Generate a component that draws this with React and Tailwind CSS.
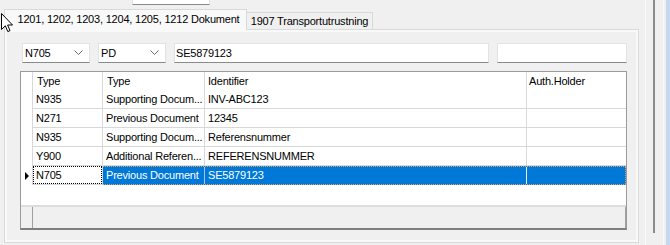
import React from "react";

const rows = [
  ["N935", "Supporting Docum...", "INV-ABC123", ""],
  ["N271", "Previous Document", "12345", ""],
  ["N935", "Supporting Docum...", "Referensnummer", ""],
  ["Y900", "Additional Referen...", "REFERENSNUMMER", ""],
  ["N705", "Previous Document", "SE5879123", ""],
];

const Chevron = () => (
  <svg width="9" height="6" viewBox="0 0 9 6" className="shrink-0">
    <polyline points="0.5,0.5 4.5,4.5 8.5,0.5" fill="none" stroke="#6d6d6d" strokeWidth="1" />
  </svg>
);

const Combo = ({ value }) => (
  <div className="w-[68px] h-[20px] bg-white border border-[#e3e3e3] border-b-[#8a8a8a] flex items-center pl-[2px] pr-[6px] justify-between">
    <span>{value}</span>
    <Chevron />
  </div>
);

const Cursor = () => (
  <svg width="13" height="20" viewBox="0 0 13 20" className="absolute left-[1px] top-[13px] z-20">
    <path
      d="M0.5 0.5 L0.5 16.5 L4.3 12.8 L6.8 18.6 L9 17.6 L6.6 12 L11.5 12 Z"
      fill="white"
      stroke="black"
      strokeWidth="1"
      strokeLinejoin="miter"
    />
  </svg>
);

const cell = "overflow-hidden whitespace-nowrap flex items-center";

const App = () => {
  return (
    <div className="w-[670px] h-[245px] bg-[#f0f0f0] relative overflow-hidden flex font-['Liberation_Sans',Arial,sans-serif] text-[11px] tracking-[-0.2px] text-black leading-none">
      <Cursor />
      {/* main area */}
      <div className="w-[640px] flex flex-col">
        <div className="h-[9px]">
          <div className="ml-[132px] w-[78px] h-[5px] bg-white border border-t-0 border-[#e3e3e3] border-b-[#8a8a8a]" />
        </div>
        <div className="h-[21px] flex items-end ml-[4px] whitespace-nowrap">
          <div className="relative z-10 w-[243px] h-[21px] bg-[#f9f9f9] border border-b-0 border-[#d9d9d9] flex items-center justify-center pl-[6px] pb-[1px]">
            1201, 1202, 1203, 1204, 1205, 1212 Dokument
          </div>
          <div className="w-[126px] h-[18px] bg-[#f0f0f0] border border-l-0 border-b-0 border-[#d9d9d9] flex items-center justify-center">
            1907 Transportutrustning
          </div>
        </div>
        <div className="-mt-px ml-[4px] w-[635px] h-[214px] border border-[#dadada] bg-[#f9f9f9] p-[2px]">
          <div className="w-full h-full bg-[#f0f0f0] pl-[14px] pt-[11px]">
            <div className="flex gap-[8px] ml-px">
              <Combo value="N705" />
              <Combo value="PD" />
              <div className="w-[315px] h-[20px] bg-white border border-[#e3e3e3] border-b-[#8a8a8a] flex items-center pl-px">
                SE5879123
              </div>
              <div className="w-[130px] h-[20px] bg-white border border-[#e3e3e3] border-b-[#8a8a8a]" />
            </div>

            {/* grid */}
            <div className="mt-[8px] -ml-[1px] w-[607px] h-[159px] border border-[#9a9a9a] border-b-2 border-b-[#7f7f7f] bg-white flex flex-col">
              <div className="flex h-[18px] shrink-0">
                <div className="w-[12px] border-r border-[#d8d8d8]" />
                <div className={`w-[70px] border-r border-[#d8d8d8] pl-[4px] ${cell}`}>Type</div>
                <div className={`w-[102px] border-r border-[#d8d8d8] pl-[4px] ${cell}`}>Type</div>
                <div className={`w-[322px] border-r border-[#d8d8d8] pl-[3px] ${cell}`}>Identifier</div>
                <div className={`w-[99px] pl-[2px] ${cell}`}>Auth.Holder</div>
              </div>
              {rows.map((r, i) => {
                const sel = i === rows.length - 1;
                return (
                  <div key={i} className="flex h-[19px] shrink-0">
                    <div className="w-[12px] border-r border-[#d8d8d8] flex items-center justify-end pr-[3px]">
                      {sel && (
                        <svg width="4" height="8" viewBox="0 0 4 8">
                          <path d="M0 0 L4 4 L0 8 Z" fill="black" />
                        </svg>
                      )}
                    </div>
                    {sel ? (
                      <>
                        <div className="w-[70px] border-r border-b border-[#d8d8d8]">
                          <div className={`h-full border border-dotted border-black pl-[2px] ${cell}`}>{r[0]}</div>
                        </div>
                        <div className="flex border-y border-dotted border-y-[#e0a060] bg-[#0078d7] text-white">
                          <div className={`w-[102px] border-r border-[#9cc4ec] pl-[3px] ${cell}`}>{r[1]}</div>
                          <div className={`w-[322px] border-r border-[#e6eef8] pl-[3px] ${cell}`}>{r[2]}</div>
                          <div className={`w-[99px] border-r border-dotted border-r-[#e0a060] ${cell}`}>{r[3]}</div>
                        </div>
                      </>
                    ) : (
                      <>
                        <div className={`w-[70px] border-r border-b border-[#d8d8d8] pl-[3px] ${cell}`}>{r[0]}</div>
                        <div className={`w-[102px] border-r border-b border-[#d8d8d8] pl-[3px] ${cell}`}>{r[1]}</div>
                        <div className={`w-[322px] border-r border-b border-[#d8d8d8] pl-[3px] ${cell}`}>{r[2]}</div>
                        <div className={`w-[99px] border-b border-[#d8d8d8] ${cell}`}>{r[3]}</div>
                      </>
                    )}
                  </div>
                );
              })}
              <div className="flex-1" />
              <div className="h-[23px] shrink-0 border-t-2 border-[#dcdcdc] bg-[#f0f0f0] flex">
                <div className="w-[12px] border-r border-[#a0a0a0]" />
                <div className="flex-1 border-r border-[#a0a0a0]" />
              </div>
            </div>
          </div>
        </div>
      </div>

      {/* right edge strip */}
      <div className="flex h-full">
        <div className="w-[5px]" />
        <div className="w-px bg-[#fbfbfb]" />
        <div className="w-[7px]" />
        <div className="w-[2px] h-[233px] bg-[#8c8c8c]" />
        <div className="w-[8px]" />
        <div className="w-px bg-[#fafafa]" />
        <div className="w-[2px]" />
        <div className="w-[4px] bg-[#c3d8f0]" />
      </div>
    </div>
  );
};

export default App;
